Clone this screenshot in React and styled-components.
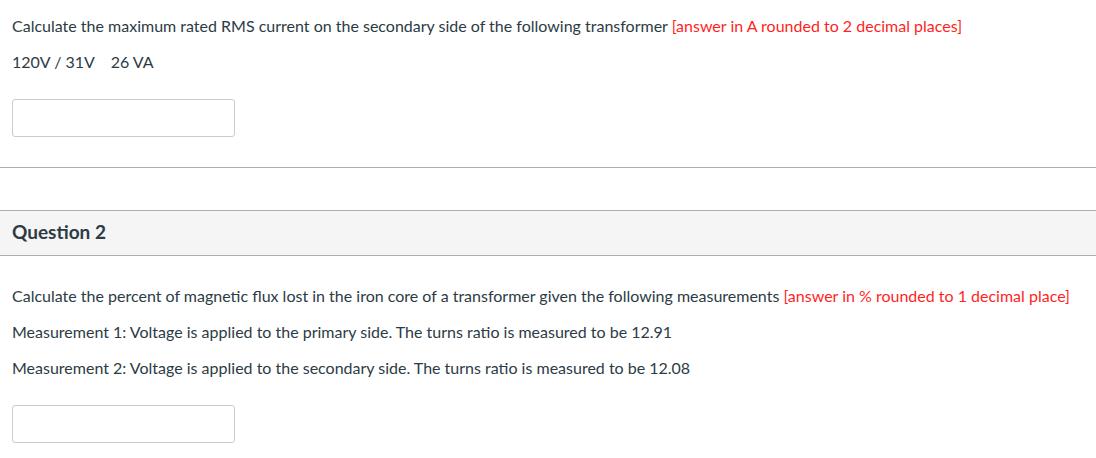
import React from 'react'
import styled, { createGlobalStyle } from 'styled-components'

const GlobalStyle = createGlobalStyle`
  body {
    margin: 0;
    background: #fff;
    font-family: Lato, "Liberation Sans", sans-serif;
    color: #2d3b45;
  }
`

const Page = styled.div`
  width: 1096px;
`

const QuestionBody = styled.div`
  padding: ${(p) => p.top || 16}px 12px 30px;
`

const Para = styled.p`
  margin: 0 0 16px;
  font-size: 16px;
  line-height: 20px;
  white-space: pre;
`

const Hint = styled.span`
  color: #ff1f1f;
`

const AnswerInput = styled.input`
  display: block;
  box-sizing: border-box;
  width: 223px;
  height: 38px;
  margin-top: 27px;
  border: 1px solid #c7cdd1;
  border-radius: 3px;
  background: #fff;
`

const Divider = styled.hr`
  margin: 0;
  border: none;
  border-top: 1px solid #a5afb5;
`

const Spacer = styled.div`
  height: 42px;
`

const Header = styled.div`
  display: flex;
  align-items: center;
  box-sizing: border-box;
  height: 46px;
  padding: 0 12px 4px;
  background: #f5f5f5;
  border-top: 1px solid #a5afb5;
  border-bottom: 1px solid #a5afb5;
  font-size: 19px;
  font-weight: 700;
`

const App = () => {
  return (
    <Page>
      <GlobalStyle />
      <QuestionBody>
        <Para>
          Calculate the maximum rated RMS current on the secondary side of the following transformer{' '}
          <Hint>[answer in A rounded to 2 decimal places]</Hint>
        </Para>
        <Para>{'120V / 31V    26 VA'}</Para>
        <AnswerInput type='text' />
      </QuestionBody>
      <Divider />
      <Spacer />
      <Header>Question 2</Header>
      <QuestionBody top={30}>
        <Para>
          Calculate the percent of magnetic flux lost in the iron core of a transformer given the following measurements{' '}
          <Hint>[answer in % rounded to 1 decimal place]</Hint>
        </Para>
        <Para>Measurement 1: Voltage is applied to the primary side. The turns ratio is measured to be 12.91</Para>
        <Para>Measurement 2: Voltage is applied to the secondary side. The turns ratio is measured to be 12.08</Para>
        <AnswerInput type='text' />
      </QuestionBody>
    </Page>
  )
}

export default App
